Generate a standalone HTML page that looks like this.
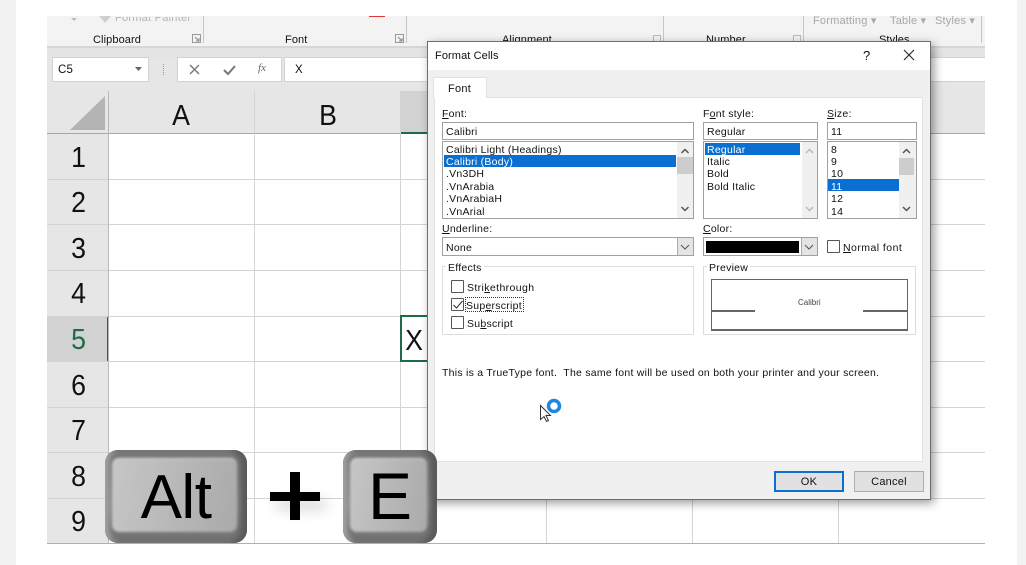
<!DOCTYPE html>
<html><head><meta charset="utf-8">
<style>
html,body{margin:0;padding:0;background:#fff}
#p{position:relative;width:1026px;height:565px;overflow:hidden;background:#fff;font-family:"Liberation Sans",sans-serif;color:#222;filter:blur(.3px)}
#p div,#p span.a{position:absolute;box-sizing:border-box}
.t{font-size:10.5px;line-height:13px;white-space:nowrap;color:#111;letter-spacing:.25px;margin-top:1px}
.r{font-size:11px;letter-spacing:.1px;margin-top:2px}
.q{font-size:11px;letter-spacing:.2px;margin-top:2px;color:#a8a8a8}
.b{border:1px solid #a0a0a0;background:#fff}
.hl{background:#0a6fd0}
.h{font-size:29px;line-height:34px;color:#111;text-align:center;transform:scaleX(.92);margin-top:1px}
.n{margin-left:1px}
.g{background:#d4d4d4}
.cb{width:13px;height:13px;border:1px solid #555;background:#fff;border-radius:1px}
u{text-underline-offset:1px}
</style></head><body><div id="p">
<div style="left:0;top:0;width:16px;height:565px;background:#f2f2f2"></div>
<div style="left:1017px;top:0;width:9px;height:565px;background:#f2f2f2"></div>

<!-- ribbon -->
<div style="left:47px;top:16px;width:938px;height:30px;background:#f3f3f3"></div>
<div style="left:47px;top:46px;width:938px;height:12px;background:#e4e4e4;border-top:2px solid #d6d6d6"></div>
<div style="left:47px;top:58px;width:938px;height:33px;background:#e6e6e6"></div>
<div style="left:47px;top:82px;width:938px;height:9px;background:#e6e6e6"></div>
<div style="left:203px;top:16px;width:1px;height:27px;background:#c6c6c6"></div>
<div style="left:406px;top:16px;width:1px;height:27px;background:#c6c6c6"></div>
<div style="left:663px;top:16px;width:1px;height:27px;background:#c6c6c6"></div>
<div style="left:803px;top:16px;width:1px;height:27px;background:#c6c6c6"></div>
<div style="left:981px;top:16px;width:1px;height:27px;background:#c6c6c6"></div>
<div class="t" style="left:115px;top:11px;height:13px;clip-path:inset(5px 0 0 0);color:#b4b4b4;font-size:11px">Format Painter</div>
<div style="left:99px;top:16px;width:12px;height:7px;background:#cfcfcf;clip-path:polygon(0 0,100% 0,50% 100%)"></div>
<div style="left:71px;top:18px;width:6px;height:3px;background:#bbb;clip-path:polygon(0 0,100% 0,50% 100%)"></div>
<div style="left:369px;top:16px;width:16px;height:1px;background:#e03a2e"></div>
<div class="t r" style="left:93px;top:32px">Clipboard</div>
<div class="t r" style="left:285px;top:32px">Font</div>
<div class="t r" style="left:502px;top:32px">Alignment</div>
<div class="t r" style="left:706px;top:32px">Number</div>
<div class="t r" style="left:879px;top:32px">Styles</div>
<div class="t q" style="left:813px;top:13px">Formatting ▾</div>
<div class="t q" style="left:890px;top:13px">Table ▾</div>
<div class="t q" style="left:935px;top:13px">Styles ▾</div>
<svg style="position:absolute;left:192px;top:34px" width="212" height="10"><path d="M.5.500h8v8h-8z" fill="none" stroke="#999"/><path d="M3 3l4 4M7 4v3H4" fill="none" stroke="#888"/><path d="M203.500.500h8v8h-8z" fill="none" stroke="#999"/><path d="M206 3l4 4M210 4v3h-3" fill="none" stroke="#888"/></svg>
<div style="left:653px;top:35px;width:8px;height:8px;border:1px solid #bbb"></div>
<div style="left:793px;top:35px;width:8px;height:8px;border:1px solid #bbb"></div>

<!-- formula bar -->
<div style="left:52px;top:57px;width:97px;height:25px;background:#fff;border:1px solid #d2d2d2"></div>
<div class="t" style="left:58px;top:63px;font-size:11.5px">C5</div>
<div style="left:135px;top:67px;width:7px;height:4px;background:#666;clip-path:polygon(0 0,100% 0,50% 100%)"></div>
<div style="left:163px;top:64px;width:1px;height:11px;border-left:1px dotted #999"></div>
<div style="left:177px;top:57px;width:105px;height:25px;background:#fff;border:1px solid #d2d2d2"></div>
<svg style="position:absolute;left:188px;top:63px" width="70" height="14"><path d="M2 2l9 9M11 2l-9 9" stroke="#777" stroke-width="1.400" fill="none"/><path d="M36 7l4 4 7-8" stroke="#777" stroke-width="2" fill="none"/></svg>
<div style="left:258px;top:62px;font:italic 11px 'Liberation Serif',serif;color:#666;white-space:nowrap">fx</div>
<div style="left:284px;top:57px;width:701px;height:25px;background:#fff;border:1px solid #d2d2d2;border-right:none"></div>
<div class="t" style="left:295px;top:63px;font-size:11.5px">X</div>

<!-- Grid -->
<div style="left:47px;top:91px;width:61px;height:452px;background:#e6e6e6"></div>
<div style="left:108px;top:91px;width:877px;height:42px;background:#e6e6e6"></div>
<div style="left:400px;top:91px;width:146px;height:42px;background:#d2d2d2"></div>
<div style="left:47px;top:316px;width:61px;height:45px;background:#d2d2d2"></div>
<div style="left:70px;top:96px;width:35px;height:34px;background:#b4b4b4;clip-path:polygon(100% 0,100% 100%,0 100%)"></div>
<div style="left:108px;top:133px;width:877px;height:410px;background:#fff"></div>
<div style="left:47px;top:133px;width:938px;height:1px;background:#a8a8a8"></div>
<div style="left:400px;top:132px;width:146px;height:2px;background:#1e6b47"></div>
<div style="left:107px;top:316px;width:2px;height:45px;background:#1e6b47"></div>

<div class="g" style="left:47px;top:179px;width:938px;height:1px"></div>
<div class="g" style="left:47px;top:224px;width:938px;height:1px"></div>
<div class="g" style="left:47px;top:270px;width:938px;height:1px"></div>
<div class="g" style="left:47px;top:316px;width:938px;height:1px"></div>
<div class="g" style="left:47px;top:361px;width:938px;height:1px"></div>
<div class="g" style="left:47px;top:407px;width:938px;height:1px"></div>
<div class="g" style="left:47px;top:452px;width:938px;height:1px"></div>
<div class="g" style="left:47px;top:498px;width:938px;height:1px"></div>
<div style="left:47px;top:543px;width:938px;height:1px;background:#b0b0b0"></div>

<div style="left:108px;top:91px;width:1px;height:452px;background:#b8b8b8"></div>
<div class="g" style="left:254px;top:91px;width:1px;height:452px"></div>
<div class="g" style="left:400px;top:91px;width:1px;height:452px"></div>
<div class="g" style="left:546px;top:91px;width:1px;height:452px"></div>
<div class="g" style="left:692px;top:91px;width:1px;height:452px"></div>
<div class="g" style="left:838px;top:91px;width:1px;height:452px"></div>

<div class="h" style="left:108px;top:98px;width:146px">A</div>
<div class="h" style="left:255px;top:98px;width:146px">B</div>
<div class="h n" style="left:47px;top:140px;width:61px">1</div>
<div class="h n" style="left:47px;top:185px;width:61px">2</div>
<div class="h n" style="left:47px;top:231px;width:61px">3</div>
<div class="h n" style="left:47px;top:276px;width:61px">4</div>
<div class="h n" style="left:47px;top:322px;width:61px;color:#1e6b47">5</div>
<div class="h n" style="left:47px;top:368px;width:61px">6</div>
<div class="h n" style="left:47px;top:413px;width:61px">7</div>
<div class="h n" style="left:47px;top:459px;width:61px">8</div>
<div class="h n" style="left:47px;top:504px;width:61px">9</div>

<div style="left:400px;top:315px;width:40px;height:47px;border:2px solid #1e6b47;background:#fff"></div>
<div class="h" style="left:400px;top:323px;width:28px">X</div>

<!-- Dialog shadow -->
<div style="left:427px;top:41px;width:504px;height:459px;box-shadow:3px 3px 9px rgba(0,0,0,.4);background:#f0f0f0;border:1px solid #6e6e6e"></div>
<div style="left:428px;top:42px;width:502px;height:28px;background:#fff"></div>
<div class="t" style="left:435px;top:49px;font-size:11px;letter-spacing:.1px">Format Cells</div>
<div class="t" style="left:863px;top:48px;font-size:13px">?</div>
<svg style="position:absolute;left:903px;top:49px" width="12" height="12"><path d="M1 1l10 10M11 1L1 11" stroke="#222" stroke-width="1.100" fill="none"/></svg>

<!-- tab -->
<div style="left:434px;top:97px;width:489px;height:365px;background:#fff;border:1px solid #e2e2e2"></div>
<div style="left:433px;top:77px;width:54px;height:21px;background:#fff;border:1px solid #e2e2e2;border-bottom:none"></div>
<div class="t" style="left:448px;top:82px;font-size:11px">Font</div>

<!-- labels -->
<div class="t" style="left:442px;top:107px"><u>F</u>ont:</div>
<div class="t" style="left:703px;top:107px">F<u>o</u>nt style:</div>
<div class="t" style="left:827px;top:107px"><u>S</u>ize:</div>

<div class="b" style="left:442px;top:122px;width:252px;height:18px"></div>
<div class="t" style="left:446px;top:125px">Calibri</div>
<div class="b" style="left:703px;top:122px;width:115px;height:18px"></div>
<div class="t" style="left:707px;top:125px">Regular</div>
<div class="b" style="left:827px;top:122px;width:90px;height:18px"></div>
<div class="t" style="left:831px;top:125px">11</div>

<!-- font list -->
<div class="b" style="left:442px;top:141px;width:252px;height:78px"></div>
<div style="left:677px;top:142px;width:16px;height:76px;background:#f0f0f0"></div>
<div style="left:677px;top:157px;width:16px;height:17px;background:#cdcdcd"></div>
<div class="hl" style="left:444px;top:155px;width:232px;height:12px"></div>
<div class="t" style="left:446px;top:143px">Calibri Light (Headings)</div>
<div class="t" style="left:446px;top:155px;color:#fff">Calibri (Body)</div>
<div class="t" style="left:446px;top:167px">.Vn3DH</div>
<div class="t" style="left:446px;top:180px">.VnArabia</div>
<div class="t" style="left:446px;top:192px">.VnArabiaH</div>
<div class="t" style="left:446px;top:205px">.VnArial</div>
<svg style="position:absolute;left:677px;top:142px" width="16" height="76"><path d="M4.500 11L8 7.500l3.500 3.500M4.500 65l3.500 3.500 3.500-3.500" stroke="#555" stroke-width="1.500" fill="none"/></svg>

<!-- style list -->
<div class="b" style="left:703px;top:141px;width:115px;height:78px"></div>
<div style="left:802px;top:142px;width:15px;height:76px;background:#f0f0f0"></div>
<div class="hl" style="left:705px;top:143px;width:95px;height:12px"></div>
<div class="t" style="left:707px;top:143px;color:#fff">Regular</div>
<div class="t" style="left:707px;top:155px">Italic</div>
<div class="t" style="left:707px;top:167px">Bold</div>
<div class="t" style="left:707px;top:180px">Bold Italic</div>
<svg style="position:absolute;left:802px;top:142px" width="15" height="76"><path d="M4 11l3.500-3.500 3.500 3.500M4 65l3.500 3.500 3.500-3.500" stroke="#bbb" stroke-width="1.500" fill="none"/></svg>

<!-- size list -->
<div class="b" style="left:827px;top:141px;width:90px;height:78px"></div>
<div style="left:899px;top:142px;width:17px;height:76px;background:#f0f0f0"></div>
<div style="left:899px;top:158px;width:15px;height:17px;background:#cdcdcd"></div>
<div class="hl" style="left:828px;top:179px;width:71px;height:12px"></div>
<div class="t" style="left:831px;top:143px">8</div>
<div class="t" style="left:831px;top:155px">9</div>
<div class="t" style="left:831px;top:167px">10</div>
<div class="t" style="left:831px;top:180px;color:#fff">11</div>
<div class="t" style="left:831px;top:192px">12</div>
<div class="t" style="left:831px;top:205px">14</div>
<svg style="position:absolute;left:899px;top:142px" width="16" height="76"><path d="M4 11l3.500-3.500 3.500 3.500M4 65l3.500 3.500 3.500-3.500" stroke="#555" stroke-width="1.500" fill="none"/></svg>

<!-- underline / color -->
<div class="t" style="left:442px;top:222px"><u>U</u>nderline:</div>
<div class="t" style="left:703px;top:222px"><u>C</u>olor:</div>
<div class="b" style="left:442px;top:237px;width:252px;height:19px"></div>
<div style="left:677px;top:238px;width:16px;height:17px;background:#e4e4e4;border-left:1px solid #aaa"></div>
<div class="t" style="left:446px;top:241px">None</div>
<div class="b" style="left:703px;top:237px;width:115px;height:19px"></div>
<div style="left:801px;top:238px;width:16px;height:17px;background:#e4e4e4;border-left:1px solid #aaa"></div>
<div style="left:706px;top:241px;width:93px;height:12px;background:#000"></div>
<svg style="position:absolute;left:677px;top:238px" width="141" height="17"><path d="M4 7l4 4 4-4M128 7l4 4 4-4" stroke="#555" stroke-width="1" fill="none"/></svg>
<div class="cb" style="left:827px;top:240px"></div>
<div class="t" style="left:843px;top:241px;letter-spacing:.45px"><u>N</u>ormal font</div>

<!-- effects -->
<div style="left:442px;top:266px;width:252px;height:69px;border:1px solid #dcdcdc"></div>
<div class="t" style="left:446px;top:261px;background:#fff;padding:0 2px">Effects</div>
<div class="cb" style="left:451px;top:280px"></div>
<div class="cb" style="left:451px;top:298px"></div>
<div class="cb" style="left:451px;top:316px"></div>
<svg style="position:absolute;left:452px;top:299px" width="12" height="12"><path d="M1.500 6l3 3 6-7" stroke="#333" stroke-width="1.100" fill="none"/></svg>
<div class="t" style="left:467px;top:281px;letter-spacing:.38px">Stri<u>k</u>ethrough</div>
<div style="left:465px;top:297px;width:59px;height:15px;border:1px dotted #333"></div>
<div class="t" style="left:466px;top:299px">Sup<u>e</u>rscript</div>
<div class="t" style="left:467px;top:317px">Su<u>b</u>script</div>

<!-- preview -->
<div style="left:703px;top:266px;width:213px;height:69px;border:1px solid #dcdcdc"></div>
<div class="t" style="left:707px;top:261px;background:#fff;padding:0 2px">Preview</div>
<div style="left:711px;top:279px;width:197px;height:52px;border:1px solid #666;border-bottom-width:2px"></div>
<div style="left:712px;top:310px;width:43px;height:2px;background:#666"></div>
<div style="left:863px;top:310px;width:44px;height:2px;background:#666"></div>
<div class="t" style="left:798px;top:295px;font-size:8px;color:#444;letter-spacing:0">Calibri</div>

<div class="t" style="left:442px;top:366px">This is a TrueType font.&nbsp; The same font will be used on both your printer and your screen.</div>

<!-- cursor -->
<svg style="position:absolute;left:538px;top:397px" width="24" height="28"><circle cx="16" cy="9" r="5.500" fill="#fff" stroke="#1f87e0" stroke-width="3.500"/><path d="M2.500 8.500v14l3.500-3 2.500 5 2-1-2.500-5h4.500z" fill="#fff" stroke="#333" stroke-width="1"/></svg>

<!-- buttons -->
<div style="left:774px;top:471px;width:70px;height:21px;background:#e1e1e1;border:2px solid #0a6fd0"></div>
<div class="t" style="left:774px;top:475px;width:70px;text-align:center;font-size:11px">OK</div>
<div style="left:854px;top:471px;width:70px;height:21px;background:#e1e1e1;border:1px solid #adadad"></div>
<div class="t" style="left:854px;top:475px;width:70px;text-align:center;font-size:11px">Cancel</div>

<!-- keys -->
<div style="left:105px;top:450px;width:142px;height:93px;border-radius:13px;background:linear-gradient(#777,#8c8c8c 60%,#6e6e6e);box-shadow:inset -7px 0 6px #5a5a5a,inset 4px 0 5px #a0a0a0"></div>
<div style="left:112px;top:458px;width:125px;height:74px;border-radius:7px;background:linear-gradient(100deg,#c6c6c6,#aaa);border-top:1px solid #dedede;filter:blur(1.2px)"></div>
<div style="left:105px;top:451px;width:142px;height:93px;font-size:62px;line-height:93px;text-align:center;color:#000;letter-spacing:-.5px">Alt</div>
<div style="left:343px;top:450px;width:94px;height:93px;border-radius:13px;background:linear-gradient(#777,#8c8c8c 60%,#6e6e6e);box-shadow:inset -7px 0 6px #5a5a5a,inset 4px 0 5px #a0a0a0"></div>
<div style="left:350px;top:458px;width:77px;height:74px;border-radius:7px;background:linear-gradient(100deg,#c6c6c6,#aaa);border-top:1px solid #dedede;filter:blur(1.2px)"></div>
<div style="left:343px;top:450px;width:94px;height:93px;font-size:66px;line-height:93px;text-align:center;color:#000">E</div>
<div style="left:270px;top:491.500px;width:50px;height:9px;background:#000;box-shadow:6px 8px 14px rgba(0,0,0,.2)"></div>
<div style="left:290px;top:472px;width:10px;height:48px;background:#000"></div>
</div></body></html>
